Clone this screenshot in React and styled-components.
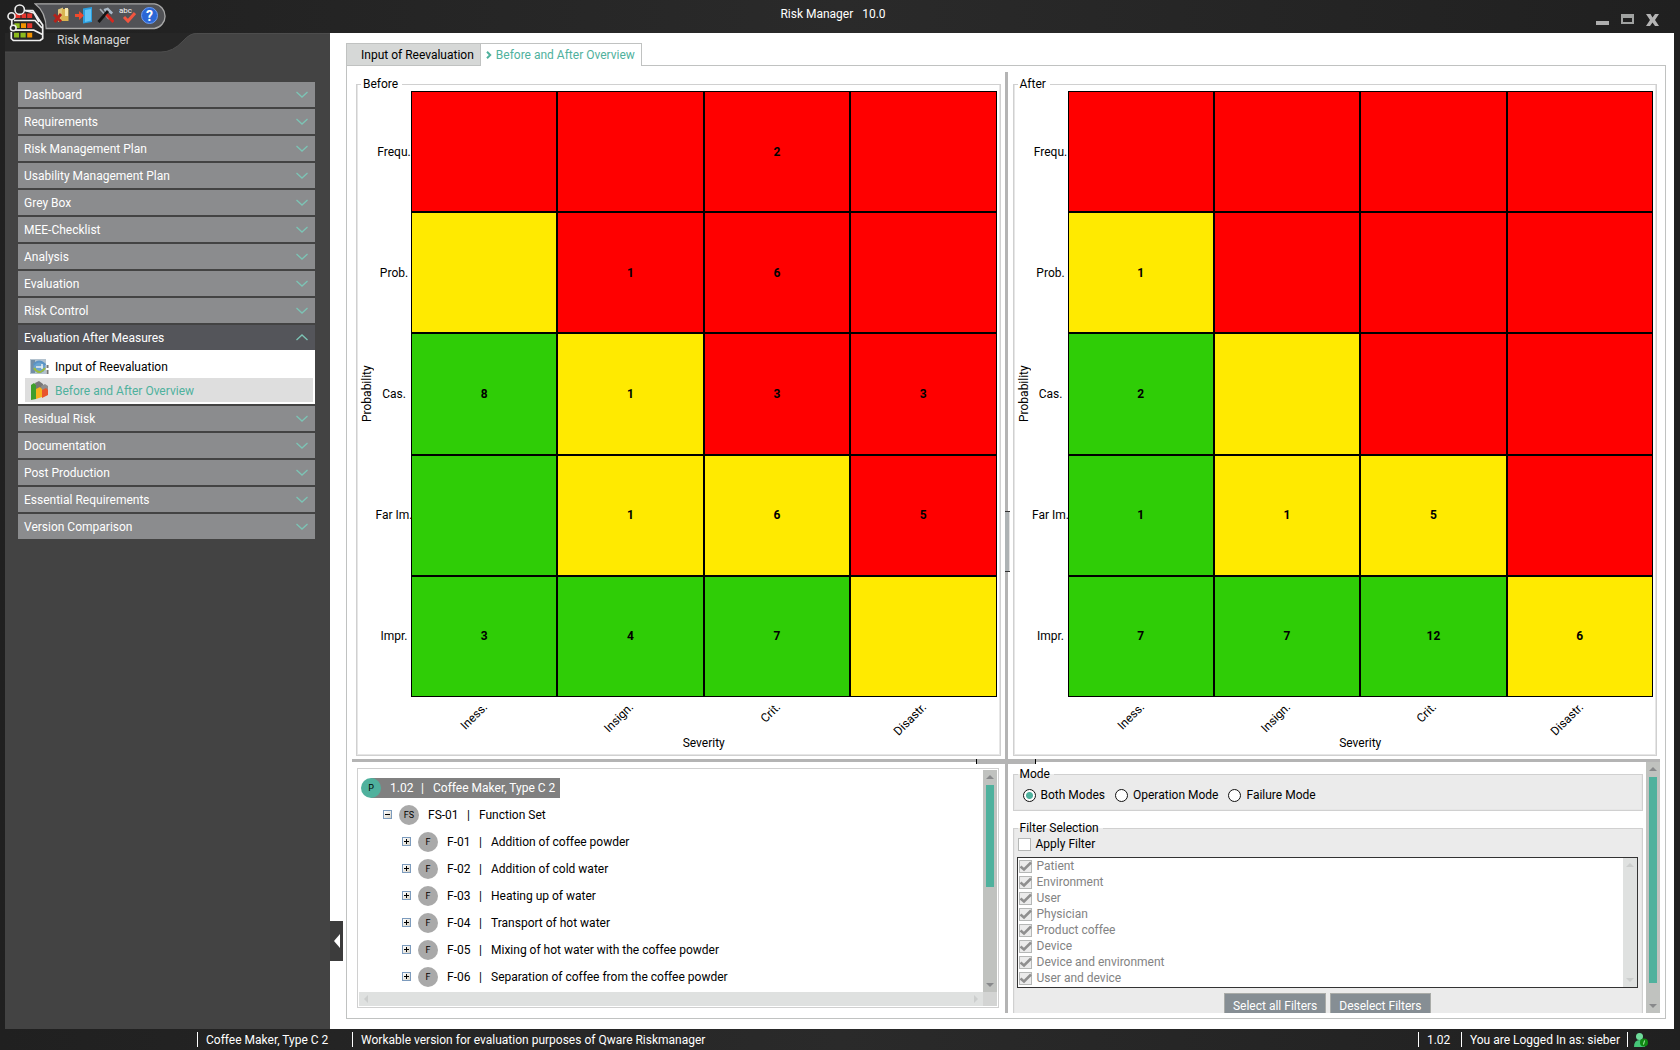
import { useState } from 'react';
import styled, { createGlobalStyle, css } from 'styled-components';

const GlobalStyle = createGlobalStyle`
    * {
        box-sizing: border-box;
    }

    body {
        margin: 0;
        font-family: Roboto, "Segoe UI", "Open Sans", sans-serif;
        font-size: 12px;
        line-height: 16px;
        color: #000000;
    }

    button, input {
        font: inherit;
        margin: 0;
    }
`;

const teal = '#4fb19d';

const Shell = styled.div`
    display: flex;
    flex-direction: column;
    height: 100vh;
    min-height: 720px;
    background: linear-gradient(90deg, #202020 0%, #2a2a2a 50%, #202020 100%);
`;

/* ---------- title bar ---------- */

const TitleBar = styled.header`
    position: relative;
    display: grid;
    grid-template-columns: 1fr auto 1fr;
    flex: none;
    height: 33px;
    color: #ffffff;
`;

const Title = styled.h1`
    margin: 0;
    padding: 6px 14px 0 0;
    font-size: 12px;
    font-weight: 400;
    white-space: pre;
`;

const WindowButtons = styled.div`
    display: flex;
    justify-content: flex-end;
    gap: 12px;
    padding: 7px 21px 0 0;
`;

const IconButton = styled.button`
    display: block;
    flex: none;
    padding: 0;
    border: none;
    background: transparent;
    line-height: 0;
    cursor: pointer;
`;

const Logo = styled.svg`
    position: absolute;
    left: 6px;
    top: 3px;
    z-index: 2;
`;

const Toolbar = styled.div`
    position: relative;
    width: 170px;
    height: 30px;
`;

const ToolbarShape = styled.svg`
    position: absolute;
    left: 34px;
    top: 3px;
`;

const ToolbarIcons = styled.div`
    position: relative;
    display: flex;
    gap: 5px;
    padding: 6px 0 0 53px;
`;

/* ---------- sidebar ---------- */

const Body = styled.div`
    display: flex;
    flex: 1;
    min-height: 0;
    padding: 0 6px 0 5px;
`;

const Sidebar = styled.aside`
    flex: none;
    width: 325px;
    background: #434343;
`;

const SidebarHead = styled.div`
    position: relative;
    height: 49px;
    color: #d6d6d6;
`;

const HeadShape = styled.svg`
    display: block;
`;

const HeadTitle = styled.span`
    position: absolute;
    left: 52px;
    top: -1px;
`;

const Menu = styled.nav`
    display: flex;
    flex-direction: column;
    gap: 2px;
    padding: 0 15px 0 13px;
`;

const MenuItem = styled.button`
    display: flex;
    align-items: center;
    justify-content: space-between;
    width: 100%;
    height: 25px;
    padding: 0 7px 0 6px;
    border: none;
    background: ${p => (p.$open ? '#54555a' : '#8b8c8e')};
    color: #ffffff;
    text-align: left;
    cursor: pointer;
`;

const SubMenu = styled.div`
    margin-top: -2px;
    padding: 4px 2px 2px 7px;
    background: #ffffff;
`;

const SubItem = styled.a`
    display: flex;
    align-items: center;
    gap: 6px;
    height: 24px;
    padding: 1px 0 0 5px;
    background: ${p => (p.$active ? '#dedede' : 'transparent')};
    color: ${p => (p.$active ? teal : '#000000')};
    text-decoration: none;
`;

/* ---------- work area ---------- */

const Main = styled.main`
    display: flex;
    flex: 1;
    min-width: 0;
    padding: 10px 8px 10px 0;
    background: #ffffff;
`;

const Collapse = styled.button`
    align-self: flex-end;
    display: flex;
    align-items: center;
    justify-content: center;
    flex: none;
    width: 13px;
    height: 40px;
    margin: 0 3px 58px 0;
    padding: 0;
    border: none;
    background: #3c3c3c;
    cursor: pointer;
`;

const Pages = styled.div`
    display: flex;
    flex: 1;
    flex-direction: column;
    min-width: 0;
`;

const Tabs = styled.div`
    display: flex;
    flex: none;
    height: 23px;
`;

const Tab = styled.button`
    display: flex;
    align-items: center;
    gap: 4px;
    height: 23px;
    padding: 0 6px 0 14px;
    border: 1px solid #c0c2c1;
    border-bottom: none;
    background: #d6d8d7;
    color: #000000;
    cursor: pointer;
    ${p => p.$active && css`
        z-index: 1;
        padding-left: 5px;
        border-left: none;
        background: #ffffff;
        color: ${teal};
    `}
`;

const Page = styled.div`
    display: flex;
    flex: 1;
    flex-direction: column;
    min-height: 0;
    margin-top: -1px;
    padding: 6px 5px 5px;
    border: 1px solid #c0c2c1;
`;

const Split = styled.div`
    display: grid;
    grid-template-columns: 1fr 3px 1fr;
    min-height: 0;
    ${p => (p.$grow ? 'flex: 1;' : 'flex: none; height: 251px;')}
`;

const Pane = styled.div`
    display: flex;
    min-width: 0;
    min-height: 0;
    padding: ${p => p.$pad};
`;

const ColumnSplitter = styled.div`
    display: flex;
    align-items: flex-end;
    background: #b4b4b4;
`;

const RowSplitter = styled.div`
    display: flex;
    justify-content: center;
    flex: none;
    height: 3px;
    background: #b4b4b4;
`;

const Grip = styled.span`
    flex: none;
    ${p => (p.$vertical ? css`
        width: 5px;
        height: 61px;
        margin-bottom: 187px;
        border: solid #333333;
        border-width: 1px 0;
        background: linear-gradient(90deg, #aeb3b5 4px, #e2e2e2 4px);
    ` : css`
        width: 60px;
        height: 5px;
        border: solid #000000;
        border-width: 0 1px;
        background: #b4b4b4;
    `)}
`;

const Group = styled.fieldset`
    flex: ${p => (p.$grow ? '1' : 'none')};
    min-width: 0;
    min-height: 0;
    margin: 0;
    padding: 0;
    border: 1px solid #d0d0d0;
    box-shadow: inset -1px -1px 0 #e6e6e6, inset 1px 0 0 #e6e6e6;
    background: ${p => (p.$shaded ? '#ebebeb' : '#ffffff')};
`;

const Legend = styled.legend`
    margin-left: 4px;
    padding: 0 4px 0 2px;
    line-height: 14px;
    background: ${p => (p.$shaded ? 'linear-gradient(#ffffff 50%, #ebebeb 50%)' : '#ffffff')};
`;

/* ---------- risk matrix ---------- */

const Chart = styled.div`
    display: grid;
    grid-template-columns: 20px 1fr;
    grid-template-rows: 1fr 20px;
    height: 100%;
    padding-right: 3px;
`;

const ProbabilityAxis = styled.div`
    display: flex;
    align-items: center;
    justify-content: center;
    padding: 38px 0 0;
    line-height: 12px;
    writing-mode: vertical-rl;
    transform: rotate(180deg);
`;

const SeverityAxis = styled.div`
    grid-column: 2;
    padding-left: 34px;
    text-align: center;
`;

const Matrix = styled.table`
    display: grid;
    grid-template-columns: 34px repeat(4, 1fr);
    grid-template-rows: repeat(5, 1fr) 38px;
    min-height: 0;

    & tbody, & tfoot, & tr {
        display: contents;
    }
`;

const RowHead = styled.th`
    display: flex;
    align-items: center;
    justify-content: center;
    padding: 0;
    font-weight: 400;
    white-space: nowrap;
`;

const colours = { r: '#ff0000', y: '#ffea00', g: '#2fcd06' };

const Cell = styled.td`
    display: flex;
    align-items: center;
    justify-content: center;
    padding: 0;
    border: 1px solid #000000;
    background: ${p => colours[p.$level]};
    font-weight: 700;
`;

const ColumnHead = styled.th`
    padding: 0 0 0 2px;
    font-weight: 400;
    text-align: right;

    & span {
        display: block;
        width: 50%;
        transform: rotate(-45deg);
        transform-origin: right center;
    }
`;

/* ---------- scroll bars ---------- */

const Bar = styled.div`
    display: flex;
    flex: none;
    flex-direction: ${p => (p.$horizontal ? 'row' : 'column')};
    align-items: center;
    justify-content: space-between;
    ${p => (p.$horizontal ? 'height: 14px; padding: 0 5px;' : 'width: 14px; padding: 5px 0;')}
    background: ${p => (p.$disabled ? '#dfe1e0' : '#c0c2bf')};
    color: ${p => (p.$disabled ? '#cccecd' : '#88898b')};
    line-height: 0;
`;

const Thumb = styled.div`
    flex: ${p => p.$size};
    width: 8px;
    margin-top: 6px;
    background: ${teal};
`;

const Rest = styled.div`
    flex: ${p => p.$size};
`;

/* ---------- function tree ---------- */

const TreeBox = styled.div`
    display: grid;
    grid-template-columns: 1fr 14px;
    grid-template-rows: 1fr 14px;
    flex: 1;
    min-width: 0;
    padding: 1px;
    border: 1px solid #d0d0d0;
`;

const Corner = styled.div`
    background: #d3d4d3;
`;

const Tree = styled.ul`
    min-height: 0;
    margin: 0;
    padding: 4px 0 0 2px;
    overflow: hidden;
    list-style: none;
`;

const Node = styled.li`
    display: flex;
    align-items: center;
    height: 27px;
    padding-left: ${p => p.$indent}px;
    white-space: nowrap;
`;

const Expander = styled.button`
    display: flex;
    align-items: center;
    justify-content: center;
    flex: none;
    width: 9px;
    height: 9px;
    margin-right: 7px;
    padding: 0;
    border: 1px solid #7c9bbd;
    background: linear-gradient(135deg, #ffffff, #d8d4c8);
    cursor: pointer;
`;

const Badge = styled.span`
    z-index: 1;
    display: flex;
    align-items: center;
    justify-content: center;
    flex: none;
    width: 20px;
    height: 20px;
    border-radius: 50%;
    background: ${p => (p.$root ? teal : '#a9a9a9')};
    font-size: 9px;
`;

const NodeText = styled.span`
    display: flex;
    align-items: center;
    height: 20px;
    ${p => p.$root && css`
        margin-left: -10px;
        padding: 0 5px 0 10px;
        background: #808080;
        color: #ffffff;
    `}
`;

const Code = styled.span`
    width: ${p => p.$width}px;
    margin-left: 9px;
`;

const Divider = styled.span`
    width: 12px;
`;

/* ---------- mode and filters ---------- */

const Options = styled.div`
    display: flex;
    flex: 1;
    flex-direction: column;
    gap: 10px;
    min-width: 0;
    min-height: 0;
    margin-right: 3px;
    padding-top: 5px;
    overflow: hidden;
`;

const ModeRow = styled.div`
    display: flex;
    gap: 10px;
    padding: 6px 0 7px 9px;
`;

const Choice = styled.label`
    display: flex;
    align-items: center;
    gap: 5px;
    height: 16px;
    color: ${p => (p.$disabled ? '#838383' : '#000000')};
`;

const Radio = styled.input`
    appearance: none;
    width: 13px;
    height: 13px;
    border: 1px solid #111111;
    border-radius: 50%;
    background: #ffffff;

    &:checked {
        background: radial-gradient(circle, ${teal} 3px, #ffffff 4px);
    }
`;

const Check = styled.input`
    appearance: none;
    width: 13px;
    height: 13px;
    border: 1px solid #b5b7b6;
    background: #ffffff;

    &:disabled {
        background: #ebebeb;
    }
`;

const CheckWrap = styled.span`
    display: grid;

    & > * {
        grid-area: 1 / 1;
    }
`;

const FilterBody = styled.div`
    padding: 0 4px 0 3px;
`;

const ApplyRow = styled.div`
    padding: 1px 0 5px 1px;
`;

const FilterList = styled.div`
    display: flex;
    height: 131px;
    border: 1px solid #333333;
    background: #ffffff;
`;

const FilterItems = styled.div`
    flex: 1;
    padding-left: 1px;
`;

const FilterButtons = styled.div`
    display: flex;
    justify-content: center;
    gap: 4px;
    padding: 5px 0;
`;

const FilterButton = styled.button`
    height: 26px;
    min-width: 100px;
    padding: 0 8px;
    border: 1px solid #a9aba8;
    background: #868e94;
    color: #ffffff;
    cursor: pointer;
`;

/* ---------- status bar ---------- */

const StatusBar = styled.footer`
    display: flex;
    align-items: center;
    flex: none;
    height: 21px;
    padding: 0 32px 0 197px;
    color: #ffffff;
`;

const Status = styled.span`
    display: flex;
    align-items: center;
    height: 15px;
    padding: ${p => p.$pad};
    border-left: 1px solid #ffffff;
    min-width: ${p => p.$min || 0}px;
    white-space: nowrap;
`;

const Spacer = styled.span`
    flex: 1;
`;

const menu = [
    'Dashboard', 'Requirements', 'Risk Management Plan', 'Usability Management Plan', 'Grey Box',
    'MEE-Checklist', 'Analysis', 'Evaluation', 'Risk Control', 'Evaluation After Measures',
    'Residual Risk', 'Documentation', 'Post Production', 'Essential Requirements', 'Version Comparison',
];

const severities = ['Iness.', 'Insign.', 'Crit.', 'Disastr.'];

// each cell is a level letter followed by its count
const before = [
    ['Frequ.', ['r', 'r', 'r2', 'r']],
    ['Prob.', ['y', 'r1', 'r6', 'r']],
    ['Cas.', ['g8', 'y1', 'r3', 'r3']],
    ['Far Im.', ['g', 'y1', 'y6', 'r5']],
    ['Impr.', ['g3', 'g4', 'g7', 'y']],
];

const after = [
    ['Frequ.', ['r', 'r', 'r', 'r']],
    ['Prob.', ['y1', 'r', 'r', 'r']],
    ['Cas.', ['g2', 'y', 'r', 'r']],
    ['Far Im.', ['g1', 'y1', 'y5', 'r']],
    ['Impr.', ['g7', 'g7', 'g12', 'y6']],
];

const functions = [
    'Addition of coffee powder', 'Addition of cold water', 'Heating up of water', 'Transport of hot water',
    'Mixing of hot water with the coffee powder', 'Separation of coffee from the coffee powder',
];

const filters = [
    'Patient', 'Environment', 'User', 'Physician', 'Product coffee', 'Device',
    'Device and environment', 'User and device',
];

const modes = ['Both Modes', 'Operation Mode', 'Failure Mode'];

function Chevron({ up }) {
    return (
        <svg width="12" height="7" viewBox="0 0 12 7" fill="none" stroke="#7cc4b5" strokeWidth="1.3">
            <path d={up ? 'M.5 6 6 1 11.5 6' : 'M.5 1 6 6 11.5 1'} />
        </svg>
    );
}

const arrows = {
    up: 'M0 4 4 0 8 4Z',
    down: 'M0 0H8L4 4Z',
    left: 'M4 0V8L0 4Z',
    right: 'M0 0 4 4 0 8Z',
};

function Arrow({ dir }) {
    const flat = dir === 'up' || dir === 'down';
    return <svg width={flat ? 8 : 4} height={flat ? 4 : 8} fill="currentColor"><path d={arrows[dir]} /></svg>;
}

function LogoMark() {
    return (
        <Logo width="40" height="40" viewBox="0 0 40 40">
            <path
                d="M3 12 9 4 19 5H29L38.500 20V36.500L35 39.500H6L3.500 36Z"
                fill="#252525" stroke="#252525" strokeWidth="1.500"
            />
            <g fill="#e5352c"><path d="M9 10.500h5.500v4.500H9zM15.500 10.500h4.700v4.500h-4.700zM21.200 10.500h5v4.500h-5zM21.200 20.300h5v4.700h-5z" /></g>
            <g fill="#8dbb1c"><path d="M8.500 20.300h5.200v4.700H8.500zM8 29.800h5v4.700H8zM14.500 29.800h5.200v4.700h-5.200z" /></g>
            <g fill="#f39200"><path d="M15 20.300h5v4.700h-5zM21.200 29.800h5v4.700h-5z" /></g>
            <g fill="none" stroke="#efefef" strokeWidth="1.700" strokeLinejoin="round">
                <path d="M8 17.500H29L36 25" />
                <path d="M19 7.700H27L36.700 22V35.500L34 37.500H7.300L5.300 35.500V29" />
                <path d="M8 27.200H28L36.500 31.500" />
                <path d="M5.800 17V22.500M20 7.700 28 10 33 19" />
            </g>
            <g fill="#252525" stroke="#efefef" strokeWidth="1.600">
                <circle cx="13.700" cy="6.700" r="4.700" />
                <circle cx="5.500" cy="13.300" r="3.500" />
                <circle cx="7.300" cy="25" r="2.800" />
            </g>
        </Logo>
    );
}

function ToolIcon({ kind }) {
    return (
        <svg width="17" height="18" viewBox="0 0 17 18">
            {kind === 'close' && <>
                <path d="M5 3.500 10 1.500V14L5 16Z" fill="#e0c77c" />
                <path d="M9 3H15.500V15H8Z" fill="#d9b551" />
                <path d="M12 2H15V10H12Z" fill="#f5e6ae" />
                <path d="M1 8.500 8 15.500M8 8 1.500 16" stroke="#b3221b" strokeWidth="2.800" />
            </>}
            {kind === 'exit' && <>
                <path d="M8 2.500 17 1V16L8 17.500Z" fill="#2c9fe0" />
                <path d="M10 4 16 3V14.500L10 16Z" fill="#64c3f3" />
                <path d="M0 8H4V5L9 9.500 4 14V11H0Z" fill="#f04a2d" />
            </>}
            {kind === 'tools' && <>
                <path d="M3 3 12 13" stroke="#a5adb5" strokeWidth="1.700" />
                <path d="M6.500 3 11 1.500 16 6.500 14.500 8.500 10.500 5.500 8 6Z" fill="#aab9c7" />
                <path d="M11 5 1.500 16" stroke="#151515" strokeWidth="2.800" />
                <path d="M9.500 8.500 16.500 16" stroke="#d8271e" strokeWidth="3" />
            </>}
            {kind === 'spell' && <>
                <text x="0" y="7" fontSize="8" fill="#f4f4f4">abc</text>
                <path d="M5 11 9 15 16 7" fill="none" stroke="#f2553f" strokeWidth="3" />
            </>}
            {kind === 'help' && <>
                <circle cx="8.500" cy="9.500" r="8" fill="#2b67d6" stroke="#6f9df0" />
                <text x="8.500" y="14.500" fontSize="14" fontWeight="700" textAnchor="middle" fill="#ffffff">?</text>
            </>}
        </svg>
    );
}

function RiskMatrix({ title, rows }) {
    return (
        <Group $grow>
            <Legend>{title}</Legend>
            <Chart>
                <ProbabilityAxis>Probability</ProbabilityAxis>
                <Matrix>
                    <tbody>
                        {rows.map(([name, cells]) => (
                            <tr key={name}>
                                <RowHead scope="row">{name}</RowHead>
                                {cells.map((c, i) => <Cell key={i} $level={c[0]}>{c.slice(1)}</Cell>)}
                            </tr>
                        ))}
                    </tbody>
                    <tfoot>
                        <tr>
                            <td />
                            {severities.map(s => <ColumnHead key={s} scope="col"><span>{s}</span></ColumnHead>)}
                        </tr>
                    </tfoot>
                </Matrix>
                <SeverityAxis>Severity</SeverityAxis>
            </Chart>
        </Group>
    );
}

function FunctionTree() {
    return (
        <TreeBox>
            <Tree>
                <Node $indent={0}>
                    <Badge $root>P</Badge>
                    <NodeText $root>
                        <Code $width={31}>1.02</Code><Divider>|</Divider>Coffee Maker, Type C 2
                    </NodeText>
                </Node>
                <Node $indent={22}>
                    <Expander aria-label="Collapse">
                        <svg width="5" height="5" stroke="#000000"><path d="M0 2.500H5" /></svg>
                    </Expander>
                    <Badge>FS</Badge>
                    <NodeText><Code $width={39}>FS-01</Code><Divider>|</Divider>Function Set</NodeText>
                </Node>
                {functions.map((f, i) => (
                    <Node key={f} $indent={41}>
                        <Expander aria-label="Expand">
                            <svg width="5" height="5" stroke="#000000"><path d="M0 2.500H5M2.500 0V5" /></svg>
                        </Expander>
                        <Badge>F</Badge>
                        <NodeText><Code $width={32}>F-0{i + 1}</Code><Divider>|</Divider>{f}</NodeText>
                    </Node>
                ))}
            </Tree>
            <Bar>
                <Arrow dir="up" />
                <Thumb $size={102} />
                <Rest $size={96} />
                <Arrow dir="down" />
            </Bar>
            <Bar $horizontal $disabled>
                <Arrow dir="left" />
                <Arrow dir="right" />
            </Bar>
            <Corner />
        </TreeBox>
    );
}

function FilterPanel() {
    const [mode, setMode] = useState(modes[0]);
    const [apply, setApply] = useState(false);
    return (
        <Options>
            <Group $shaded>
                <Legend $shaded>Mode</Legend>
                <ModeRow>
                    {modes.map(m => (
                        <Choice key={m}>
                            <Radio type="radio" name="mode" checked={mode === m} onChange={() => setMode(m)} />
                            {m}
                        </Choice>
                    ))}
                </ModeRow>
            </Group>
            <Group $shaded>
                <Legend $shaded>Filter Selection</Legend>
                <FilterBody>
                    <ApplyRow>
                        <Choice>
                            <Check type="checkbox" checked={apply} onChange={() => setApply(!apply)} />
                            Apply Filter
                        </Choice>
                    </ApplyRow>
                    <FilterList>
                        <FilterItems>
                            {filters.map(f => (
                                <Choice key={f} $disabled={!apply}>
                                    <CheckWrap>
                                        <Check type="checkbox" defaultChecked disabled={!apply} />
                                        <svg width="13" height="13" fill="none" stroke="#8f8f8f" strokeWidth="2.500" pointerEvents="none">
                                            <path d="M1.500 6.500 5 9.500 12 2.500" />
                                        </svg>
                                    </CheckWrap>
                                    {f}
                                </Choice>
                            ))}
                        </FilterItems>
                        <Bar $disabled>
                            <Arrow dir="up" />
                            <Arrow dir="down" />
                        </Bar>
                    </FilterList>
                    <FilterButtons>
                        <FilterButton>Select all Filters</FilterButton>
                        <FilterButton>Deselect Filters</FilterButton>
                    </FilterButtons>
                </FilterBody>
            </Group>
        </Options>
    );
}

export default function App() {
    return (
        <Shell>
            <GlobalStyle />
            <TitleBar>
                <Toolbar>
                    <LogoMark />
                    <ToolbarShape width="134" height="27" viewBox="0 0 134 27">
                        <path d="M1 .8H120.500A12.500 12.500 0 0 1 120.500 25.500H12Q12 9 1 .8Z" fill="#515256" stroke="#a8a8a8" strokeWidth="1.300" />
                    </ToolbarShape>
                    <ToolbarIcons>
                        {['close', 'exit', 'tools', 'spell', 'help'].map(k => (
                            <IconButton key={k} aria-label={k}><ToolIcon kind={k} /></IconButton>
                        ))}
                    </ToolbarIcons>
                </Toolbar>
                <Title>{'Risk Manager   10.0'}</Title>
                <WindowButtons>
                    <IconButton aria-label="Minimize">
                        <svg width="13" height="14"><path d="M0 8H13V12H0Z" fill="#aeaeae" /></svg>
                    </IconButton>
                    <IconButton aria-label="Maximize">
                        <svg width="13" height="14"><path d="M0 1H13V11H0ZM2 5V9H11V5Z" fill="#a0a2a1" fillRule="evenodd" /></svg>
                    </IconButton>
                    <IconButton aria-label="Close">
                        <svg width="13" height="14"><path d="M0 1H4.500L6.500 4.500 9 1H13L9 7 13 13H9L6.500 9.500 4 13H0L4 7Z" fill="#b4b4b4" /></svg>
                    </IconButton>
                </WindowButtons>
            </TitleBar>
            <Body>
                <Sidebar>
                    <SidebarHead>
                        <HeadShape width="325" height="20">
                            <path d="M0 0H192Q185 0 178 8 168 19 156 19H0Z" fill="#262626" />
                            <path d="M325 .5H192Q185 0 178 8 168 19 156 19H0" fill="none" stroke="#4d4d4d" />
                        </HeadShape>
                        <HeadTitle>Risk Manager</HeadTitle>
                    </SidebarHead>
                    <Menu>
                        {menu.map(name => {
                            const open = name === 'Evaluation After Measures';
                            return [
                                <MenuItem key={name} $open={open} aria-expanded={open}>{name}<Chevron up={open} /></MenuItem>,
                                open && (
                                    <SubMenu key="sub">
                                        <SubItem href="#input">
                                            <svg width="19" height="18" viewBox="0 0 19 18">
                                                <path d="M0 1H16V16H0Z" fill="#b4c3cf" />
                                                <path d="M1 2H5V15H1Z" fill="#738ea6" />
                                                <circle cx="9.500" cy="9" r="6" fill="#6aa3cf" />
                                                <path d="M4 10Q9 18 15 10" fill="none" stroke="#9dbb3c" strokeWidth="2" />
                                                <path d="M3.500 7Q9 0 15.500 7" fill="none" stroke="#5b93c4" strokeWidth="2" />
                                                <path d="M6 9H13M12 6V11" fill="none" stroke="#e8eef2" strokeWidth="1.500" />
                                                <path d="M16.500 7h2v3h-2zM16.500 12h2v4h-2z" fill="#777777" />
                                            </svg>
                                            Input of Reevaluation
                                        </SubItem>
                                        <SubItem href="#overview" $active>
                                            <svg width="19" height="20" viewBox="0 0 19 20">
                                                <path d="M5 2 9 0 13 3V12L7 14Z" fill="#777777" />
                                                <path d="M11 5 15 3 18 5V14H12Z" fill="#8d8d8d" />
                                                <path d="M1 4 4 2 6 4V18L1 19Z" fill="#3f9e2c" />
                                                <path d="M6 8 10 6 12 8V16L6 18Z" fill="#f6b21c" />
                                                <path d="M12 9 16 7 18 9V14L12 17Z" fill="#e8542c" />
                                            </svg>
                                            Before and After Overview
                                        </SubItem>
                                    </SubMenu>
                                ),
                            ];
                        })}
                    </Menu>
                </Sidebar>
                <Main>
                    <Collapse aria-label="Hide menu">
                        <svg width="6" height="14" fill="#ffffff"><path d="M6 0V14L0 7Z" /></svg>
                    </Collapse>
                    <Pages>
                        <Tabs role="tablist">
                            <Tab role="tab">Input of Reevaluation</Tab>
                            <Tab role="tab" $active aria-selected="true">
                                <svg width="6" height="8" fill="none" stroke={teal} strokeWidth="2"><path d="M1 .8 4.200 4 1 7.200" /></svg>
                                Before and After Overview
                            </Tab>
                        </Tabs>
                        <Page>
                            <Split $grow>
                                <Pane $pad="5px 4px 3px 4px"><RiskMatrix title="Before" rows={before} /></Pane>
                                <ColumnSplitter><Grip $vertical /></ColumnSplitter>
                                <Pane $pad="5px 3px 3px 5px"><RiskMatrix title="After" rows={after} /></Pane>
                            </Split>
                            <RowSplitter><Grip /></RowSplitter>
                            <Split>
                                <Pane $pad="6px 6px 5px 5px"><FunctionTree /></Pane>
                                <ColumnSplitter />
                                <Pane $pad="0 0 0 5px">
                                    <FilterPanel />
                                    <Bar>
                                        <Arrow dir="up" />
                                        <Thumb $size={205} />
                                        <Rest $size={21} />
                                        <Arrow dir="down" />
                                    </Bar>
                                </Pane>
                            </Split>
                        </Page>
                    </Pages>
                </Main>
            </Body>
            <StatusBar>
                <Status $pad="0 8px" $min={155}>Coffee Maker, Type C 2</Status>
                <Status $pad="0 8px">Workable version for evaluation purposes of Qware Riskmanager</Status>
                <Spacer />
                <Status $pad="0 8px" $min={43}>1.02</Status>
                <Status $pad="0 7px 0 8px">You are Logged In as: sieber</Status>
                <Status $pad="0 0 0 6px">
                    <svg width="14" height="14" viewBox="0 0 14 14">
                        <circle cx="5.500" cy="3.500" r="3.500" fill="#6fdc9a" />
                        <path d="M0 14Q0 7 5.500 7T11 14Z" fill="#45c578" />
                        <circle cx="10" cy="9.500" r="4" fill="#0f8a12" />
                        <path d="M10.500 7.500 9.500 11.500" stroke="#b8f0b8" fill="none" />
                    </svg>
                </Status>
            </StatusBar>
        </Shell>
    );
}
